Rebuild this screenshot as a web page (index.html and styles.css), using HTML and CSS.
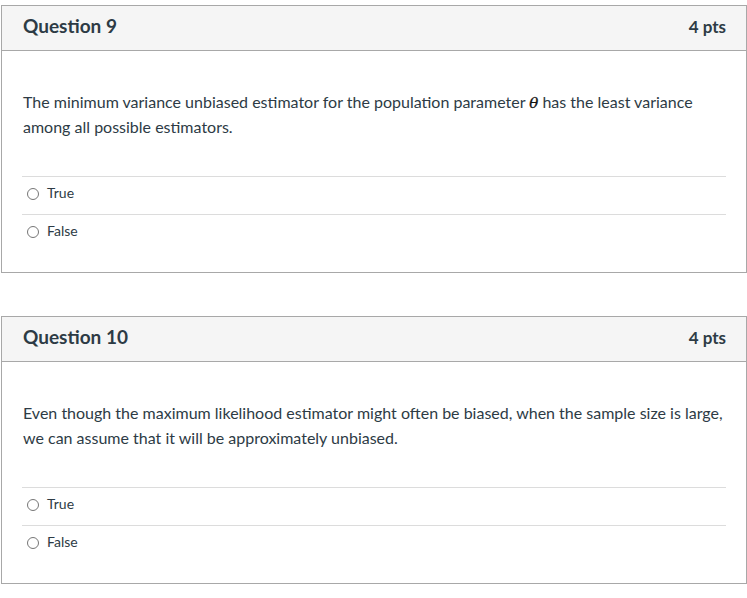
FILE: index.html
```html
<!DOCTYPE html>
<html>
<head>
<meta charset="utf-8">
<link rel="stylesheet" href="styles.css">
</head>
<body>
<div class="quiz">
  <div class="card">
    <div class="card-header">
      <span class="q-title">Question 9</span>
      <span class="q-pts">4 pts</span>
    </div>
    <div class="card-body">
      <div class="q-text">The minimum variance unbiased estimator for the population parameter <i class="math">θ</i> has the least variance among all possible estimators.</div>
      <div class="answers">
        <label class="answer"><span class="radio"></span><span class="a-label">True</span></label>
        <label class="answer"><span class="radio"></span><span class="a-label">False</span></label>
      </div>
    </div>
  </div>
  <div class="card">
    <div class="card-header">
      <span class="q-title">Question 10</span>
      <span class="q-pts">4 pts</span>
    </div>
    <div class="card-body">
      <div class="q-text">Even though the maximum likelihood estimator might often be biased, when the sample size is large, we can assume that it will be approximately unbiased.</div>
      <div class="answers">
        <label class="answer"><span class="radio"></span><span class="a-label">True</span></label>
        <label class="answer"><span class="radio"></span><span class="a-label">False</span></label>
      </div>
    </div>
  </div>
</div>
</body>
</html>
```

FILE: styles.css
```css
* { box-sizing: border-box; }
html, body {
  margin: 0;
  padding: 0;
  background: #ffffff;
}
body {
  font-family: Lato, "Liberation Sans", sans-serif;
  color: #2d3b45;
}
.quiz {
  padding: 5px 0 0 1px;
  display: flex;
  flex-direction: column;
  gap: 43px;
}
.card {
  width: 746px;
  border: 1px solid #a8a8a8;
  background: #fff;
}
.card-header {
  height: 45px;
  background: #f5f5f5;
  border-bottom: 1px solid #a8a8a8;
  display: flex;
  justify-content: space-between;
  align-items: baseline;
  padding: 8px 20px 0 21px;
}
.q-title {
  font-size: 19px;
  font-weight: 700;
  line-height: 24px;
}
.q-pts {
  font-size: 17px;
  font-weight: 700;
  line-height: 24px;
}
.card-body {
  padding: 38px 20px 20px 21px;
}
.q-text {
  font-size: 16px;
  line-height: 25px;
  height: 50px;
}
.math {
  font-family: "DejaVu Serif", "Liberation Serif", serif;
  font-style: italic;
  font-size: 15px;
  font-weight: 400;
  line-height: 1;
  color: #111;
  -webkit-text-stroke: 0.3px #111;
}
.answers {
  margin-top: 37px;
  margin-left: -1px;
}
.answer {
  display: flex;
  align-items: center;
  height: 38px;
  border-top: 1px solid #dcdcdc;
  padding: 0 0 5px 5px;
  font-size: 14px;
}
.radio {
  width: 12px;
  height: 12px;
  border: 1px solid #767676;
  border-radius: 50%;
  margin-right: 8px;
  margin-top: 2px;
  flex: none;
}
.a-label {
  line-height: 20px;
}
```
